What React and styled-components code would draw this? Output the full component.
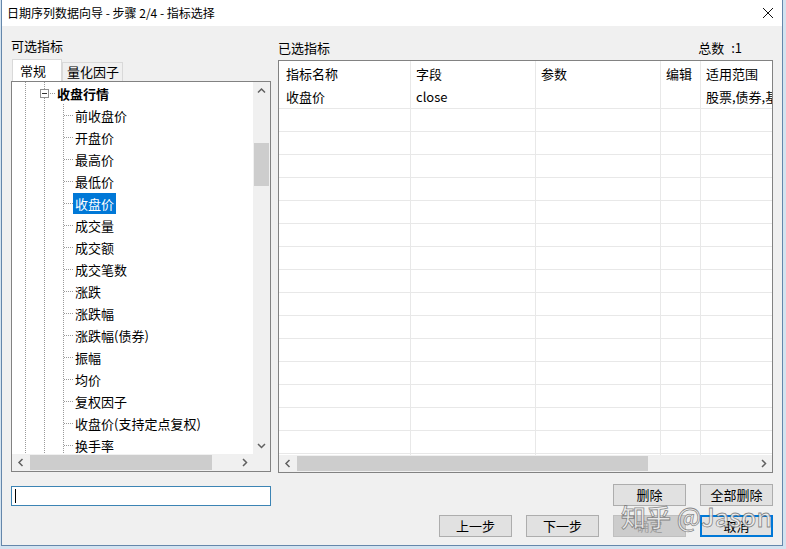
import React from 'react';
import styled, { createGlobalStyle, css } from 'styled-components';

const Global = createGlobalStyle`
  html, body { margin: 0; padding: 0; }
  body {
    background: #d3e3f0;
    font-family: "Noto Sans CJK SC", "Noto Sans", sans-serif;
    font-size: 13px;
    color: #000;
  }
`;

const Window = styled.div`
  position: relative;
  box-sizing: border-box;
  width: 782px;
  height: 546px;
  margin-left: 1px;
  border: 1px solid #6587ab;
  border-top: none;
  background: #f0f0f0;
  overflow: hidden;
`;

const TitleBar = styled.div`
  height: 26px;
  background: #fff;
  display: flex;
  align-items: center;
  justify-content: space-between;
  padding: 0 8px 0 5px;
  font-size: 12px;
  line-height: 16px;
`;

const Body = styled.div`
  display: grid;
  grid-template-columns: 260px 495px;
  column-gap: 7px;
  padding: 12px 8px 0 9px;
`;

const Column = styled.div`
  display: flex;
  flex-direction: column;
`;

const Label = styled.div`
  height: 16px;
  line-height: 16px;
  margin-top: ${p => p.$mt || 0}px;
  display: flex;
  justify-content: space-between;
  padding-right: ${p => p.$pr || 0}px;
`;

const Count = styled.span`
  display: flex;
  gap: 7px;
`;

const Tabs = styled.div`
  display: flex;
  align-items: flex-end;
  height: 22px;
  margin: 5px 0 0 1px;
`;

const Tab = styled.div`
  box-sizing: border-box;
  width: ${p => p.$w}px;
  height: ${p => (p.$active ? 22 : 19)}px;
  padding-left: ${p => p.$pl}px;
  background: ${p => (p.$active ? '#fff' : '#f0f0f0')};
  border: 1px solid #d9d9d9;
  border-bottom: none;
  line-height: ${p => (p.$active ? 21 : 18)}px;
`;

const Panel = styled.div`
  box-sizing: border-box;
  height: ${p => p.$h}px;
  margin-top: ${p => p.$mt || 0}px;
  border: 1px solid #828282;
  background: #fff;
  display: grid;
  grid-template-columns: ${p => (p.$vscroll ? '1fr 17px' : '1fr')};
  grid-template-rows: 1fr 17px;
  overflow: hidden;
`;

const TreeViewport = styled.div`
  overflow: hidden;
  background-color: #fff;
  background-image: linear-gradient(#9a9a9a 50%, transparent 0), linear-gradient(#9a9a9a 50%, transparent 0);
  background-size: 1px 2px;
  background-position: 13px 0, 32px 0;
  background-repeat: repeat-y;
`;

const TreeRow = styled.div`
  position: relative;
  height: 22px;
  display: flex;
  align-items: center;
  white-space: nowrap;
  padding-left: ${p => (p.$child ? 61 : 28)}px;
  ${p => p.$child && css`
    background: linear-gradient(#9a9a9a 50%, transparent 0) 51px 0 / 1px 2px repeat-y;
    &::before {
      content: '';
      position: absolute;
      left: 52px;
      top: 11px;
      width: 9px;
      border-top: 1px dotted #9a9a9a;
    }
  `}
`;

const ExpandBox = styled.span`
  box-sizing: border-box;
  width: 9px;
  height: 9px;
  border: 1px solid #919191;
  background: #fff;
  display: flex;
  align-items: center;
  justify-content: center;
  &::after {
    content: '';
    width: 5px;
    height: 1px;
    background: #333;
  }
`;

const Connector = styled.span`
  width: 5px;
  margin-left: 1px;
  border-top: 1px dotted #9a9a9a;
`;

const NodeLabel = styled.span`
  height: 21px;
  line-height: 21px;
  padding: 0 2px;
  font-weight: ${p => (p.$bold ? 700 : 400)};
  background: ${p => (p.$selected ? '#0078d7' : 'transparent')};
  color: ${p => (p.$selected ? '#fff' : '#000')};
`;

const VScroll = styled.div`
  background: #f0f0f0;
  display: flex;
  flex-direction: column;
`;

const HScroll = styled.div`
  background: #f0f0f0;
  display: flex;
  align-items: center;
`;

const ArrowBtn = styled.div`
  flex: 0 0 17px;
  width: 17px;
  height: 17px;
  display: flex;
  align-items: center;
  justify-content: center;
`;

const VThumb = styled.div`
  margin: ${p => p.$offset}px 1px 0 1px;
  height: ${p => p.$len}px;
  background: #cdcdcd;
`;

const HThumb = styled.div`
  margin-left: ${p => p.$offset}px;
  width: ${p => p.$len}px;
  height: 15px;
  background: #cdcdcd;
`;

const Spacer = styled.div`
  flex: 1;
`;

const Corner = styled.div`
  background: #f0f0f0;
`;

const TableViewport = styled.div`
  overflow: hidden;
`;

const TRow = styled.div`
  display: flex;
  height: ${p => (p.$header ? 25 : 23)}px;
  box-sizing: border-box;
  border-bottom: ${p => (p.$header ? 'none' : '1px solid #e8e8e8')};
  white-space: nowrap;
`;

const TCell = styled.div`
  flex: 0 0 ${p => p.$w}px;
  box-sizing: border-box;
  border-right: 1px solid #e8e8e8;
  padding-left: ${p => p.$pl}px;
  line-height: ${p => (p.$header ? 25 : 22)}px;
  overflow: hidden;
`;

const SearchBox = styled.div`
  box-sizing: border-box;
  height: 20px;
  margin-top: 14px;
  border: 1px solid #3c84b4;
  background: #fff;
  display: flex;
  align-items: center;
  padding-left: 3px;
`;

const Caret = styled.span`
  width: 1px;
  height: 14px;
  background: #000;
`;

const ButtonRow = styled.div`
  display: flex;
  justify-content: flex-end;
  gap: 14px;
  margin-top: ${p => p.$mt}px;
`;

const Button = styled.div`
  box-sizing: border-box;
  width: 73px;
  height: 22px;
  background: ${p => (p.$disabled ? '#cccccc' : '#e1e1e1')};
  border: ${p => (p.$focused ? '2px solid #0078d7' : p.$disabled ? '1px solid #bfbfbf' : '1px solid #adadad')};
  color: ${p => (p.$disabled ? '#a0a0a0' : '#000')};
  display: flex;
  align-items: center;
  justify-content: center;
  line-height: 18px;
`;

const Watermark = styled.div`
  position: absolute;
  left: 619px;
  top: 500px;
  font-family: "Noto Sans CJK SC", sans-serif;
  font-size: 25px;
  line-height: 32px;
  font-weight: 500;
  color: rgba(238, 238, 238, 0.85);
  -webkit-text-stroke: 0.8px rgba(90, 90, 90, 0.7);
  white-space: pre;
  pointer-events: none;
`;

const Chevron = ({ dir }) => {
  const pts = {
    up: '1,5.5 4.5,2 8,5.5',
    down: '1,2 4.5,5.5 8,2',
    left: '5.5,1 2,4.5 5.5,8',
    right: '2,1 5.5,4.5 2,8',
  }[dir];
  const vertical = dir === 'up' || dir === 'down';
  return (
    <svg width={vertical ? 9 : 7} height={vertical ? 7 : 9} viewBox={vertical ? '0 0 9 7' : '0 0 7 9'}>
      <polyline points={pts} fill="none" stroke="#606060" strokeWidth="1.5" />
    </svg>
  );
};

const CloseIcon = () => (
  <svg width="12" height="12" viewBox="0 0 12 12">
    <path d="M1 1 L11 11 M11 1 L1 11" stroke="#111" strokeWidth="1" fill="none" />
  </svg>
);

const treeItems = [
  '前收盘价', '开盘价', '最高价', '最低价', '收盘价', '成交量', '成交额', '成交笔数',
  '涨跌', '涨跌幅', '涨跌幅(债券)', '振幅', '均价', '复权因子', '收盘价(支持定点复权)', '换手率', '换手率(基准)',
];

const columns = [
  { key: 'name', title: '指标名称', w: 132, pl: 7 },
  { key: 'field', title: '字段', w: 125, pl: 5 },
  { key: 'param', title: '参数', w: 125, pl: 5 },
  { key: 'edit', title: '编辑', w: 40, pl: 5 },
  { key: 'scope', title: '适用范围', w: 110, pl: 5 },
];

const rows = [{ name: '收盘价', field: 'close', param: '', edit: '', scope: '股票,债券,基金' }];
const emptyRows = Array.from({ length: 16 }, () => ({}));

export default function App() {
  return (
    <>
      <Global />
      <Window>
        <TitleBar>
          <span>日期序列数据向导 - 步骤 2/4 - 指标选择</span>
          <CloseIcon />
        </TitleBar>
        <Body>
          <Column>
            <Label>可选指标</Label>
            <Tabs>
              <Tab $active $w={50} $pl={7}>常规</Tab>
              <Tab $w={61} $pl={4}>量化因子</Tab>
            </Tabs>
            <Panel $h={391} $vscroll>
              <TreeViewport>
                <TreeRow>
                  <ExpandBox />
                  <Connector />
                  <NodeLabel $bold>收盘行情</NodeLabel>
                </TreeRow>
                {treeItems.map((t, i) => (
                  <TreeRow key={i} $child>
                    <NodeLabel $selected={i === 4}>{t}</NodeLabel>
                  </TreeRow>
                ))}
              </TreeViewport>
              <VScroll>
                <ArrowBtn><Chevron dir="up" /></ArrowBtn>
                <VThumb $offset={44} $len={43} />
                <Spacer />
                <ArrowBtn><Chevron dir="down" /></ArrowBtn>
              </VScroll>
              <HScroll>
                <ArrowBtn><Chevron dir="left" /></ArrowBtn>
                <HThumb $offset={1} $len={182} />
                <Spacer />
                <ArrowBtn><Chevron dir="right" /></ArrowBtn>
              </HScroll>
              <Corner />
            </Panel>
            <SearchBox><Caret /></SearchBox>
          </Column>
          <Column>
            <Label $mt={2} $pr={31}>
              <span>已选指标</span>
              <Count><span>总数</span><span>:1</span></Count>
            </Label>
            <Panel $h={413} $mt={4}>
              <TableViewport>
                <TRow $header>
                  {columns.map(c => (
                    <TCell key={c.key} $w={c.w} $pl={c.pl} $header>{c.title}</TCell>
                  ))}
                </TRow>
                {[...rows, ...emptyRows].map((r, i) => (
                  <TRow key={i}>
                    {columns.map(c => (
                      <TCell key={c.key} $w={c.w} $pl={c.pl}>{r[c.key] || ''}</TCell>
                    ))}
                  </TRow>
                ))}
              </TableViewport>
              <HScroll>
                <ArrowBtn><Chevron dir="left" /></ArrowBtn>
                <HThumb $offset={1} $len={351} />
                <Spacer />
                <ArrowBtn><Chevron dir="right" /></ArrowBtn>
              </HScroll>
            </Panel>
            <ButtonRow $mt={11}>
              <Button>删除</Button>
              <Button>全部删除</Button>
            </ButtonRow>
            <ButtonRow $mt={9}>
              <Button>上一步</Button>
              <Button>下一步</Button>
              <Button $disabled>确定</Button>
              <Button $focused>取消</Button>
            </ButtonRow>
          </Column>
        </Body>
        <Watermark>知乎 @Jason</Watermark>
      </Window>
    </>
  );
}
